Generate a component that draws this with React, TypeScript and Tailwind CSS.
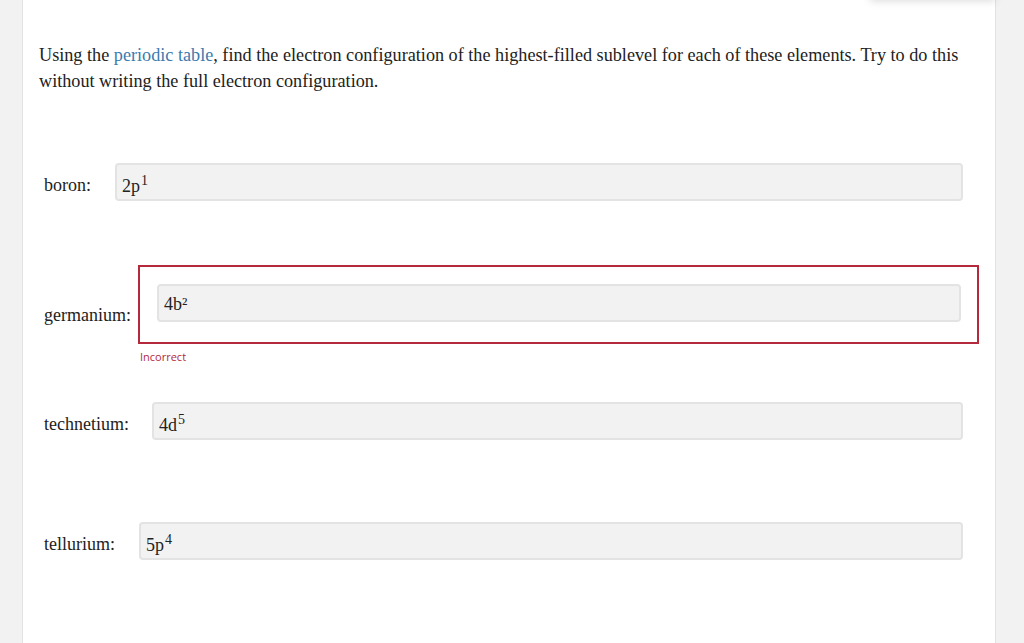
import React from "react";

const serif = { fontFamily: '"Liberation Serif", "Times New Roman", serif' };

function Field({ children, pt = "pt-[6px]" }: { children: React.ReactNode; pt?: string }) {
  return (
    <div
      className={
        "flex-1 h-[38px] rounded-[4px] border-2 border-[#e3e3e3] bg-[#f2f2f2] pl-[5px] text-[18px] leading-[24px] text-[#222] " +
        pt
      }
    >
      {children}
    </div>
  );
}

function Sup({ children }: { children: React.ReactNode }) {
  return <sup className="text-[14px] -top-[7px] ml-[1px]">{children}</sup>;
}

export default function App() {
  return (
    <div className="relative w-[1024px] h-[643px] overflow-hidden bg-[#f2f2f2]" style={serif}>
      <div className="ml-[22px] w-[974px] h-[643px] bg-white border-x border-[#e2e2e2] pl-[16px] pr-[16px]">
        <p className="pt-[42px] text-[18.2px] leading-[26px] text-[#222] whitespace-nowrap">
          Using the <span className="text-[#3b7bb0]">periodic table</span>, find the electron configuration of the
          highest-filled sublevel for each of these elements. Try to do this
          <br />
          without writing the full electron configuration.
        </p>

        <div className="mt-[69px] ml-[5px] mr-[16px] flex items-center">
          <span className="w-[71px] pt-[6px] text-[18px] text-[#222]">boron:</span>
          <Field pt="pt-[9px]">
            2p<Sup>1</Sup>
          </Field>
        </div>

        <div className="mt-[64px] ml-[5px] flex items-start">
          <span className="w-[94px] pt-[37px] text-[18px] text-[#222]">germanium:</span>
          <div className="flex flex-col">
            <div className="w-[841px] h-[79px] border-2 border-[#b5293c] pt-[17px] pl-[17px] pr-[16px]">
              <div className="flex">
                <Field>4b²</Field>
              </div>
            </div>
            <span
              className="mt-[6px] ml-[2px] text-[11px] leading-[14px] text-[#b5293c]"
              style={{ fontFamily: '"Open Sans", "Noto Sans", sans-serif' }}
            >
              Incorrect
            </span>
          </div>
        </div>

        <div className="mt-[38px] ml-[5px] mr-[16px] flex items-center">
          <span className="w-[108px] pt-[6px] text-[18px] text-[#222]">technetium:</span>
          <Field pt="pt-[9px]">
            4d<Sup>5</Sup>
          </Field>
        </div>

        <div className="mt-[82px] ml-[5px] mr-[16px] flex items-center">
          <span className="w-[95px] pt-[6px] text-[18px] text-[#222]">tellurium:</span>
          <Field pt="pt-[9px]">
            5p<Sup>4</Sup>
          </Field>
        </div>
      </div>
      <div className="absolute right-[29px] top-[-45px] w-[125px] h-[44px] bg-white shadow-[0_2px_8px_rgba(0,0,0,0.15)]" />
    </div>
  );
}
